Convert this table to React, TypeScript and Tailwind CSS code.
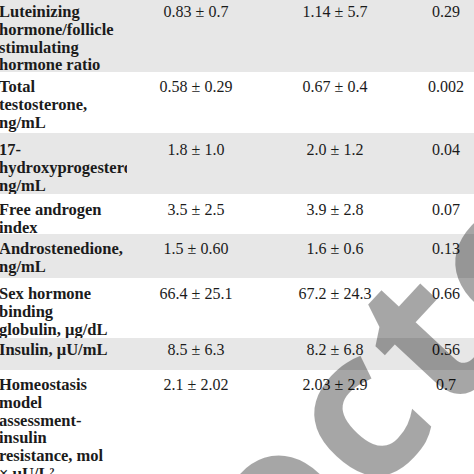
import React from "react";

type Row = {
  label: string[];
  a: string;
  b: string;
  p: string;
  h: string;
  pt: string;
  gray: boolean;
};

const rows: Row[] = [
  { label: ["Luteinizing", "hormone/follicle", "stimulating", "hormone ratio"], a: "0.83 ± 0.7", b: "1.14 ± 5.7", p: "0.29", h: "h-[72px]", pt: "pt-[3px]", gray: true },
  { label: ["Total", "testosterone,", "ng/mL"], a: "0.58 ± 0.29", b: "0.67 ± 0.4", p: "0.002", h: "h-[61px]", pt: "pt-[6px]", gray: false },
  { label: ["17-", "hydroxyprogesterone,", "ng/mL"], a: "1.8 ± 1.0", b: "2.0 ± 1.2", p: "0.04", h: "h-[61px]", pt: "pt-[8px]", gray: true },
  { label: ["Free androgen", "index"], a: "3.5 ± 2.5", b: "3.9 ± 2.8", p: "0.07", h: "h-[40px]", pt: "pt-[7px]", gray: false },
  { label: ["Androstenedione,", "ng/mL"], a: "1.5 ± 0.60", b: "1.6 ± 0.6", p: "0.13", h: "h-[44px]", pt: "pt-[6px]", gray: true },
  { label: ["Sex hormone", "binding", "globulin, μg/dL"], a: "66.4 ± 25.1", b: "67.2 ± 24.3", p: "0.66", h: "h-[60px]", pt: "pt-[7px]", gray: false },
  { label: ["Insulin, μU/mL"], a: "8.5 ± 6.3", b: "8.2 ± 6.8", p: "0.56", h: "h-[32px]", pt: "pt-[3px]", gray: true },
  { label: ["Homeostasis", "model", "assessment-", "insulin", "resistance, mol", "× μU/L²"], a: "2.1 ± 2.02", b: "2.03 ± 2.9", p: "0.7", h: "h-[120px]", pt: "pt-[6px]", gray: false },
];

export default function App() {
  return (
    <div className="relative w-[474px] h-[474px] overflow-hidden bg-white text-[#1b1b1b] font-['Liberation_Serif',serif]">
      <div className="flex flex-col">
        {rows.map((r, i) => (
          <div key={i} className={`flex ${r.h} ${r.pt} ${r.gray ? "bg-[#e7e7e7]" : "bg-white"}`}>
            <div className="w-[128px] shrink-0 overflow-hidden whitespace-nowrap -ml-[1px] text-[16.5px] leading-[17.8px] font-bold">
              {r.label.map((l, j) => (
                <div key={j}>{l}</div>
              ))}
            </div>
            <div className="w-[138px] shrink-0 text-center text-[16px] leading-[17.8px]">{r.a}</div>
            <div className="w-[140px] shrink-0 text-center text-[16px] leading-[17.8px]">{r.b}</div>
            <div className="w-[68px] shrink-0 pl-[14px] text-center text-[16px] leading-[17.8px]">{r.p}</div>
          </div>
        ))}
      </div>
      {/* watermark */}
      <div className="absolute left-[17px] top-[282px] -rotate-[47deg] whitespace-nowrap text-[205px] leading-none font-bold tracking-[6px] text-black/35 font-['Open_Sans',sans-serif] pointer-events-none">
        doctor
      </div>
    </div>
  );
}
